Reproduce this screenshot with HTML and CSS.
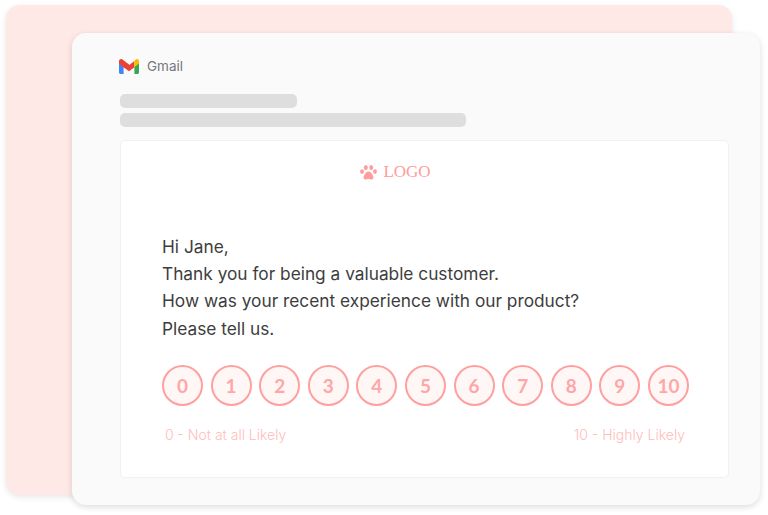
FILE: index.html
```html
<!DOCTYPE html>
<html lang="en">
<head>
    <meta charset="UTF-8">
    <meta name="viewport" content="width=device-width, initial-scale=1.0">
    <title>Email survey</title>
    <link rel="stylesheet" href="styles.css">
</head>
<body>
    <div class="back-card"></div>
    <div class="mail-window">
        <div class="gmail">
            <svg class="gmail-icon" width="20" height="15" viewBox="0 0 20 15">
                <path fill="#4285f4" d="M0 2v11.6C0 14.4.6 15 1.4 15h3.2V7.2L0 2z"/>
                <path fill="#34a853" d="M20 2v11.6c0 .8-.6 1.4-1.4 1.4h-3.2V7.2L20 2z"/>
                <path fill="#ea4335" d="M4.6 8.2 0 4.6V2.2C0 .4 2-.6 3.4.4L10 5.4l1 3-1 2.4-5.4-2.6z"/>
                <path fill="#ea4335" d="M4.6 8.2V2.1L10 6.2l5.4-4.1v6.1L10 12.2 4.6 8.2z"/>
                <path fill="#fbbc04" d="M15.4 2.1 16.6.4C18-.6 20 .4 20 2.2v2.4l-4.6 3.6V2.1z"/>
            </svg>
            <span class="gmail-name">Gmail</span>
        </div>
        <div class="subject-bar subject-short"></div>
        <div class="subject-bar subject-long"></div>
        <div class="mail-body">
            <div class="logo">
                <svg width="17" height="15" viewBox="0 0 17 15">
                    <ellipse cx="2" cy="6.6" rx="1.9" ry="2.3" fill="#ff9c9c"/>
                    <ellipse cx="5.8" cy="2.6" rx="2" ry="2.5" fill="#ff9c9c"/>
                    <ellipse cx="11.2" cy="2.6" rx="2" ry="2.5" fill="#ff9c9c"/>
                    <ellipse cx="15" cy="6.6" rx="1.9" ry="2.3" fill="#ff9c9c"/>
                    <path fill="#ff9c9c" d="M8.5 6.4c2.3 0 4.6 3.4 4.9 5.8.2 1.8-1.4 2.6-2.8 2.2-1.4-.4-2.8-.4-4.2 0-1.4.4-3-.4-2.8-2.2.3-2.4 2.6-5.8 4.9-5.8z"/>
                </svg>
                <span>LOGO</span>
            </div>
            <div class="message">
                <p>Hi Jane,</p>
                <p>Thank you for being a valuable customer.</p>
                <p>How was your recent experience with our product?</p>
                <p>Please tell us.</p>
            </div>
            <div class="scale">
                <div class="score">0</div>
                <div class="score">1</div>
                <div class="score">2</div>
                <div class="score">3</div>
                <div class="score">4</div>
                <div class="score">5</div>
                <div class="score">6</div>
                <div class="score">7</div>
                <div class="score">8</div>
                <div class="score">9</div>
                <div class="score">10</div>
            </div>
            <div class="scale-labels">
                <span>0 - Not at all Likely</span>
                <span>10 - Highly Likely</span>
            </div>
        </div>
    </div>
</body>
</html>
```

FILE: styles.css
```css
body {
    margin: 0;
    width: 768px;
    height: 515px;
    position: relative;
    overflow: hidden;
    background: #fff;
    font-family: Inter, Arial, sans-serif;
}

.back-card {
    position: absolute;
    left: 6px;
    top: 5px;
    width: 726px;
    height: 490px;
    background: #ffe9e7;
    border-radius: 14px;
    box-shadow: 0 2px 6px rgba(0, 0, 0, 0.1);
}

.mail-window {
    position: absolute;
    left: 72px;
    top: 33px;
    width: 688px;
    height: 472px;
    box-sizing: border-box;
    padding: 24px 31px 27px 47px;
    background: #fafafa;
    border-radius: 14px;
    box-shadow: 0 2px 6px rgba(0, 0, 0, 0.14);
}

.gmail {
    display: flex;
    align-items: center;
    gap: 8px;
    height: 18px;
}

.gmail-name {
    font-family: Inter, Arial, sans-serif;
    font-size: 13.5px;
    color: #74777c;
}

.subject-bar {
    margin-left: 1px;
    height: 14px;
    background: #dedede;
    border-radius: 5px;
}

.subject-short {
    width: 177px;
    margin-top: 19px;
}

.subject-long {
    width: 346px;
    margin-top: 5px;
}

.mail-body {
    margin: 13px 0 0 1px;
    height: 338px;
    box-sizing: border-box;
    padding: 21px 39px 0 41px;
    background: #fff;
    border: 1px solid #f1f1f1;
    border-radius: 5px;
}

.logo {
    display: flex;
    justify-content: center;
    align-items: center;
    gap: 6px;
    height: 20px;
    padding-right: 60px;
    font-family: "Liberation Serif", serif;
    font-size: 17px;
    color: #ff9c9c;
}

.message {
    margin-top: 51px;
    font-size: 17.3px;
    line-height: 27.2px;
    color: #3d3d3d;
}

.message p {
    margin: 0;
}

.scale {
    display: flex;
    justify-content: space-between;
    margin-top: 23px;
}

.score {
    width: 41px;
    height: 41px;
    box-sizing: border-box;
    display: flex;
    justify-content: center;
    align-items: center;
    border: 2px solid #ff9f9f;
    border-radius: 50%;
    background: #fff7f6;
    font-family: Lato, Arial, sans-serif;
    font-weight: 700;
    font-size: 19px;
    color: #ffa6a6;
}

.scale-labels {
    display: flex;
    justify-content: space-between;
    margin-top: 20px;
    padding: 0 4px 0 3px;
    font-family: Inter, Arial, sans-serif;
    font-weight: 300;
    font-size: 14px;
    color: #ffbcbc;
}
```
